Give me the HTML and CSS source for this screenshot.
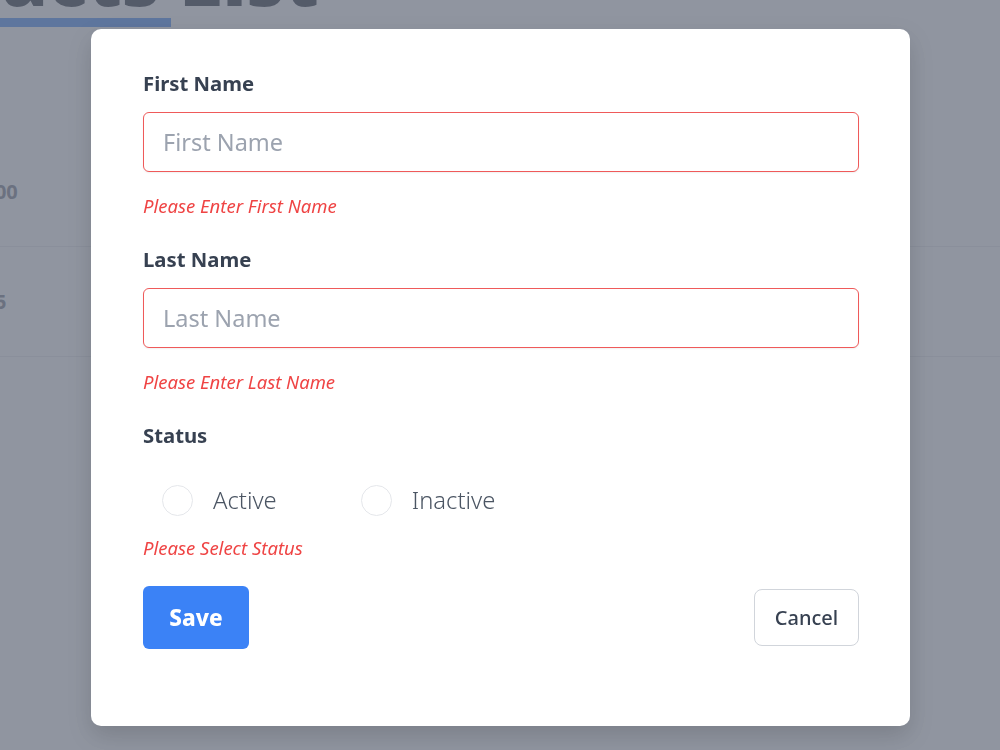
FILE: index.html
```html
<!DOCTYPE html>
<html>
<head>
<meta charset="utf-8">
<link rel="stylesheet" href="styles.css">
</head>
<body>
<div class="page">
  <div class="page-head">
    <h1 class="page-title">Contacts List</h1>
    <div class="page-tab"></div>
  </div>
  <div class="table">
    <div class="row"><span class="cell">1200</span></div>
    <div class="row"><span class="cell">125</span></div>
  </div>
</div>

<div class="overlay">
  <div class="modal">
    <div class="field">
      <label class="label">First Name</label>
      <input class="input" type="text" placeholder="First Name">
      <p class="error">Please Enter First Name</p>
    </div>
    <div class="field">
      <label class="label">Last Name</label>
      <input class="input" type="text" placeholder="Last Name">
      <p class="error">Please Enter Last Name</p>
    </div>
    <div class="field">
      <label class="label">Status</label>
      <div class="radios">
        <label class="radio"><input type="radio" name="status"><span>Active</span></label>
        <label class="radio"><input type="radio" name="status"><span>Inactive</span></label>
      </div>
      <p class="error error-status">Please Select Status</p>
    </div>
    <div class="actions">
      <button class="btn btn-save">Save</button>
      <button class="btn btn-cancel">Cancel</button>
    </div>
  </div>
</div>
</body>
</html>
```

FILE: styles.css
```css
* { box-sizing: border-box; }

html, body {
  margin: 0;
  padding: 0;
  width: 1000px;
  height: 750px;
  overflow: hidden;
  background: #ffffff;
  font-family: "Noto Sans", "Open Sans", sans-serif;
}

/* page behind the modal */
.page {
  width: 1000px;
}

.page-head {
  margin-top: -52px;
}

.page-title {
  margin: 0 0 0 -177px;
  font-size: 74px;
  line-height: 60px;
  font-weight: 900;
  color: #111827;
  white-space: nowrap;
}

.page-tab {
  width: 171px;
  height: 9px;
  margin-top: 10px;
  background: #3b82f6;
}

.table {
  margin-top: 110px;
}

.row {
  height: 110px;
  display: flex;
  align-items: center;
  border-bottom: 1px solid #e5e7eb;
}

.cell {
  display: block;
  margin-left: -28px;
  white-space: nowrap;
  font-size: 20px;
  font-weight: 700;
  color: #6b7280;
}

/* overlay */
.overlay {
  position: fixed;
  inset: 0;
  background: rgba(107, 114, 128, 0.75);
}

.modal {
  margin: 29px 0 0 91px;
  width: 819px;
  height: 697px;
  background: #ffffff;
  border-radius: 10px;
  box-shadow: 0 10px 25px rgba(0, 0, 0, 0.15);
  padding: 39px 51px 0 52px;
}

.field {
  display: flex;
  flex-direction: column;
}

.label {
  display: block;
  font-size: 20.3px;
  line-height: 30px;
  font-weight: 700;
  color: #374151;
}

.input {
  margin-top: 14px;
  height: 60px;
  width: 100%;
  border: 1.5px solid #ef5a5a;
  border-radius: 6px;
  padding: 0 19px;
  font-family: inherit;
  font-size: 23.5px;
  color: #111827;
  outline: none;
  box-shadow: 0 1px 2px rgba(0, 0, 0, 0.06);
}

.input::placeholder {
  color: #9ca3af;
}

.error {
  margin: 22px 0 26px;
  font-size: 18.5px;
  line-height: 24px;
  font-style: italic;
  color: #ef4444;
}

.radios {
  display: flex;
  align-items: center;
  height: 40px;
  margin-top: 30px;
  padding-left: 19px;
  gap: 84px;
}

.radio {
  display: flex;
  align-items: center;
  gap: 20px;
  font-size: 23.8px;
  font-weight: 300;
  color: #4b5563;
}

.radio input {
  appearance: none;
  -webkit-appearance: none;
  margin: 0;
  width: 31px;
  height: 31px;
  border: 1.5px solid #e5e7eb;
  border-radius: 50%;
  background: #fff;
}

.error-status {
  margin: 16px 0 26px;
}

.actions {
  display: flex;
  justify-content: space-between;
  align-items: center;
}

.btn {
  font-family: inherit;
  cursor: pointer;
  border-radius: 6px;
}

.btn-save {
  width: 106px;
  height: 63px;
  border: none;
  background: #3b82f6;
  color: #ffffff;
  font-size: 22.5px;
  font-weight: 800;
}

.btn-cancel {
  width: 105px;
  height: 57px;
  border: 1.5px solid #d1d5db;
  border-radius: 8px;
  background: #ffffff;
  color: #374151;
  font-size: 20px;
  font-weight: 500;
}
```
